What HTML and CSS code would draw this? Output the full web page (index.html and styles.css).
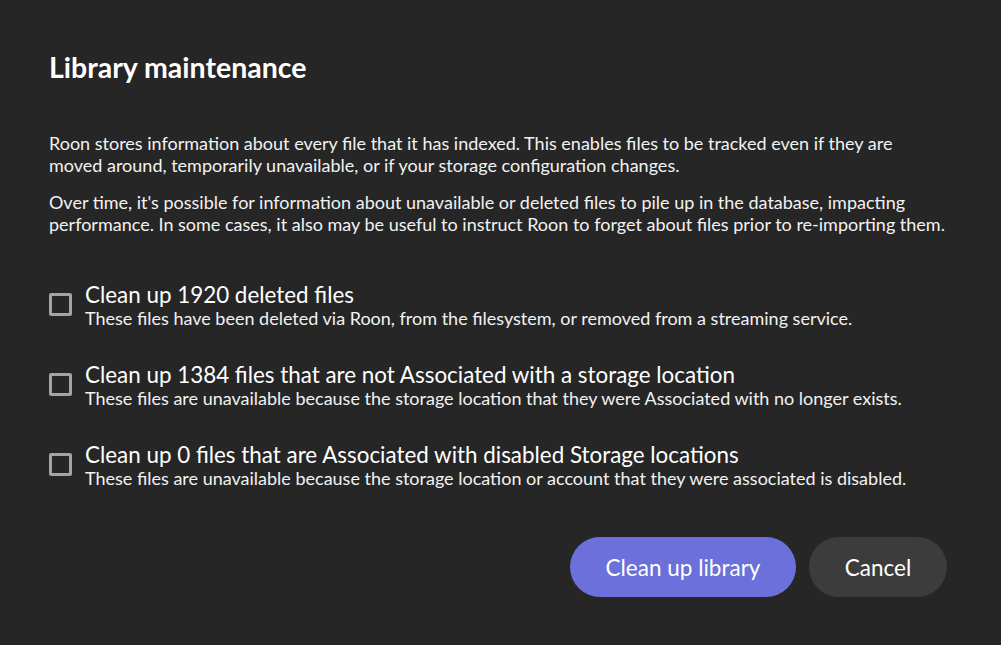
FILE: index.html
```html
<!DOCTYPE html>
<html>
  <head>
    <title>Library maintenance</title>
    <link rel="stylesheet" href="styles.css">
  </head>

  <body>
    <div class="dialog">
      <h1>Library maintenance</h1>

      <div class="intro">
        <p>
          Roon stores information about every file that it has indexed. This enables files to be tracked even if they are
          moved around, temporarily unavailable, or if your storage configuration changes.
        </p>
        <p>
          Over time, it's possible for information about unavailable or deleted files to pile up in the database, impacting
          performance. In some cases, it also may be useful to instruct Roon to forget about files prior to re-importing them.
        </p>
      </div>

      <div class="options">
        <label class="option">
          <span class="box"></span>
          <span class="text">
            <span class="title">Clean up 1920 deleted files</span>
            <span class="sub">These files have been deleted via Roon, from the filesystem, or removed from a streaming service.</span>
          </span>
        </label>

        <label class="option">
          <span class="box"></span>
          <span class="text">
            <span class="title">Clean up 1384 files that are not Associated with a storage location</span>
            <span class="sub">These files are unavailable because the storage location that they were Associated with no longer exists.</span>
          </span>
        </label>

        <label class="option">
          <span class="box"></span>
          <span class="text">
            <span class="title">Clean up 0 files that are Associated with disabled Storage locations</span>
            <span class="sub">These files are unavailable because the storage location or account that they were associated is disabled.</span>
          </span>
        </label>
      </div>

      <div class="actions">
        <button class="primary" type="button">Clean up library</button>
        <button class="secondary" type="button">Cancel</button>
      </div>
    </div>
  </body>
</html>
```

FILE: styles.css
```css
/* library maintenance dialog */
body {
  margin: 0;
  background: #262626;
  color: #fff;
  font-family: Lato, "Noto Sans", sans-serif;
  min-height: 100vh;
}

.dialog {
  padding: 50px 54px 0 49px;
}

h1 {
  margin: 0;
  font-size: 28.5px;
  font-weight: bold;
  line-height: 34px;
}

.intro {
  margin-top: 48px;
  display: flex;
  flex-direction: column;
  gap: 15px;
}

.intro p {
  margin: 0;
  font-size: 18px;
  line-height: 22px;
  color: #f2f2f2;
}

.options {
  margin-top: 48px;
  display: flex;
  flex-direction: column;
  gap: 34px;
}

.option {
  display: flex;
  align-items: flex-start;
  gap: 13px;
  cursor: pointer;
}

.box {
  flex: none;
  width: 17px;
  height: 17px;
  margin-top: 10px;
  border: 3px solid #a3a3aa;
  border-radius: 2px;
}

.text {
  display: flex;
  flex-direction: column;
}

.title {
  font-size: 22.4px;
  line-height: 24px;
}

.sub {
  font-size: 18px;
  line-height: 22px;
  color: #f2f2f2;
}

.actions {
  margin-top: 48px;
  display: flex;
  justify-content: flex-end;
  gap: 13px;
}

button {
  height: 60px;
  border: none;
  border-radius: 30px;
  color: #fff;
  font-family: Lato, "Noto Sans", sans-serif;
  font-size: 22.5px;
  cursor: pointer;
}

.primary {
  width: 226px;
  background-color: #6b70da;
}

.secondary {
  width: 138px;
  background-color: #3c3c3c;
}
```
